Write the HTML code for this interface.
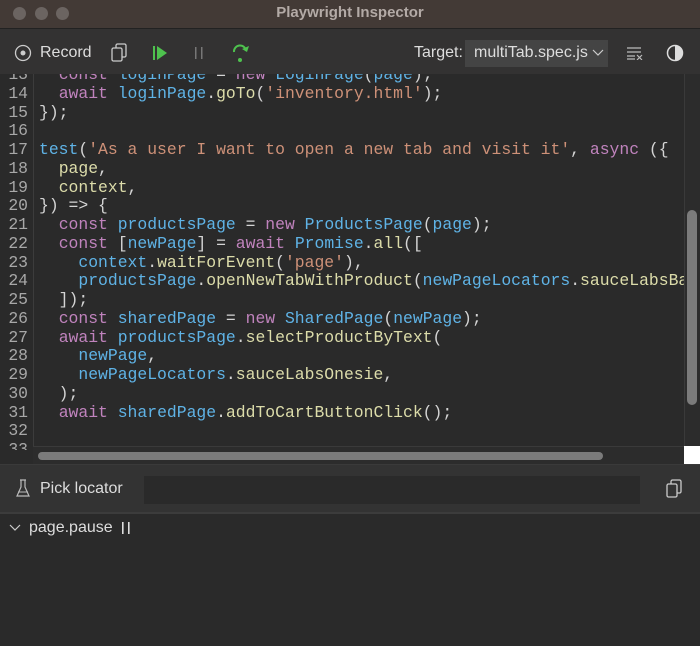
<!DOCTYPE html>
<html><head><style>
*{margin:0;padding:0;box-sizing:border-box}
body{width:700px;height:646px;background:#2a2a2a;overflow:hidden;font-family:"Liberation Sans",sans-serif;position:relative;color:#ddd}
.title{position:absolute;left:0;top:0;width:700px;height:28px;background:#433a36;text-align:center;font-weight:bold;font-size:15px;color:#b3aaa6;line-height:26px;z-index:5}
.dot{position:absolute;top:7px;width:13px;height:13px;border-radius:50%;background:#6b6461;z-index:6}
.tb{position:absolute;left:0;top:28px;width:700px;height:46px;background:#333232;border-top:1px solid #222;z-index:4}
.tb span{position:absolute;top:15px;font-size:16px;color:#ddd}
.code{position:absolute;left:0;top:66px;width:684px;height:384px;overflow:hidden;font-family:"Liberation Mono",monospace;font-size:16.4px;line-height:18.75px;background:#2a2a2a}
.gut{position:absolute;left:0;top:0;width:34px;border-right:1px solid #3c3c3c;height:400px;text-align:right;padding-right:5px;color:#a8a8a8}
.src{position:absolute;left:39px;top:0;white-space:pre;color:#d4d4d4}
.k{color:#c083bd}.v{color:#5fb3e6}.f{color:#dcdcaa}.s{color:#ce9178}
.pl{position:absolute;left:0;top:464px;width:700px;height:50px;background:#333;border-top:1px solid #3a3a3a;border-bottom:2px solid #3c3c3c}
</style></head><body>
<div class="tb">
<svg style="position:absolute;left:14px;top:15px" width="18" height="18"><circle cx="9" cy="9" r="7.5" fill="none" stroke="#ccc" stroke-width="1.3"/><circle cx="9" cy="9" r="2.5" fill="#ccc"/></svg>
<span style="left:40px">Record</span>
<svg style="position:absolute;left:111px;top:14px" width="18" height="20"><rect x="5" y="1" width="10" height="13" rx="1.5" fill="none" stroke="#ccc" stroke-width="1.3"/><rect x="1" y="5" width="10" height="13" rx="1.5" fill="#333232" stroke="#ccc" stroke-width="1.3"/></svg>
<svg style="position:absolute;left:152px;top:16px" width="16" height="16"><rect x="1" y="1" width="2" height="14" fill="#4ec24e"/><path d="M5 1 L15 8 L5 15Z" fill="#4ec24e"/></svg>
<svg style="position:absolute;left:194px;top:17px" width="12" height="14"><rect x="1" y="1" width="1.5" height="12" fill="#777"/><rect x="7" y="1" width="1.5" height="12" fill="#777"/></svg>
<svg style="position:absolute;left:230px;top:13px" width="20" height="22"><path d="M4 10 A6 6 0 1 1 16 9" fill="none" stroke="#4ec24e" stroke-width="2"/><path d="M12 7 L17 10 L19 4Z" fill="#4ec24e"/><circle cx="10" cy="18" r="2" fill="#4ec24e"/></svg>
<span style="left:414px">Target:</span>
<div style="position:absolute;left:465px;top:11px;width:143px;height:27px;background:#444"></div>
<span style="left:474px">multiTab.spec.js</span>
<svg style="position:absolute;left:592px;top:20px" width="12" height="8"><path d="M1 1 L6 6 L11 1" fill="none" stroke="#ccc" stroke-width="1.2"/></svg>
<svg style="position:absolute;left:626px;top:17px" width="18" height="14"><path d="M1 2H15M1 6H15M1 10H9M1 13H9M11 9L16 14M16 9L11 14" stroke="#bbb" stroke-width="1.2" fill="none"/></svg>
<svg style="position:absolute;left:666px;top:15px" width="18" height="18"><circle cx="9" cy="9" r="7.5" fill="none" stroke="#ddd" stroke-width="1.5"/><path d="M9 1.5 A7.5 7.5 0 0 1 9 16.5Z" fill="#ddd"/></svg>
</div>
<div class="code">
<div class="gut">13<br>14<br>15<br>16<br>17<br>18<br>19<br>20<br>21<br>22<br>23<br>24<br>25<br>26<br>27<br>28<br>29<br>30<br>31<br>32<br>33</div>
<div class="src">  <span class="k">const</span> <span class="v">loginPage</span> = <span class="k">new</span> <span class="v">LoginPage</span>(<span class="v">page</span>);
  <span class="k">await</span> <span class="v">loginPage</span>.<span class="f">goTo</span>(<span class="s">'inventory.html'</span>);
});

<span class="v">test</span>(<span class="s">'As a user I want to open a new tab and visit it'</span>, <span class="k">async</span> ({
  <span class="f">page</span>,
  <span class="f">context</span>,
}) => {
  <span class="k">const</span> <span class="v">productsPage</span> = <span class="k">new</span> <span class="v">ProductsPage</span>(<span class="v">page</span>);
  <span class="k">const</span> [<span class="v">newPage</span>] = <span class="k">await</span> <span class="v">Promise</span>.<span class="f">all</span>([
    <span class="v">context</span>.<span class="f">waitForEvent</span>(<span class="s">'page'</span>),
    <span class="v">productsPage</span>.<span class="f">openNewTabWithProduct</span>(<span class="v">newPageLocators</span>.<span class="f">sauceLabsBackpack</span>),
  ]);
  <span class="k">const</span> <span class="v">sharedPage</span> = <span class="k">new</span> <span class="v">SharedPage</span>(<span class="v">newPage</span>);
  <span class="k">await</span> <span class="v">productsPage</span>.<span class="f">selectProductByText</span>(
    <span class="v">newPage</span>,
    <span class="v">newPageLocators</span>.<span class="f">sauceLabsOnesie</span>,
  );
  <span class="k">await</span> <span class="v">sharedPage</span>.<span class="f">addToCartButtonClick</span>();


</div>
</div>
<div style="position:absolute;left:33px;top:446px;width:651px;height:18px;background:#2c2c2c;border-top:1px solid #3a3a3a"></div>
<div style="position:absolute;left:38px;top:452px;width:565px;height:8px;border-radius:4px;background:#7b7b7b"></div>
<div style="position:absolute;left:684px;top:74px;width:16px;height:372px;background:#2c2c2c;border-left:1px solid #3a3a3a"></div>
<div style="position:absolute;left:687px;top:210px;width:10px;height:195px;border-radius:5px;background:#7b7b7b"></div>
<div style="position:absolute;left:684px;top:446px;width:16px;height:18px;background:#fff"></div>
<div class="pl">
<svg style="position:absolute;left:16px;top:14px" width="14" height="20"><path d="M4 1H10M5 1V8L1 17H13L9 8V1" fill="none" stroke="#bbb" stroke-width="1.2"/><path d="M2 13H12" stroke="#bbb"/></svg>
<span style="position:absolute;left:40px;top:15px;font-size:16px;color:#ddd">Pick locator</span>
<div style="position:absolute;left:144px;top:11px;width:496px;height:28px;background:#2a2a2a"></div>
<svg style="position:absolute;left:665px;top:14px" width="18" height="22"><rect x="6" y="1" width="10" height="13" rx="1.5" fill="none" stroke="#ccc" stroke-width="1.3"/><rect x="2" y="5" width="10" height="13" rx="1.5" fill="#333" stroke="#ccc" stroke-width="1.3"/></svg>
</div>
<svg style="position:absolute;left:9px;top:524px" width="12" height="8"><path d="M1 1L6 6L11 1" fill="none" stroke="#ccc" stroke-width="1.2"/></svg>
<span style="position:absolute;left:29px;top:519px;font-size:16px;color:#ddd">page.pause</span>
<svg style="position:absolute;left:120px;top:521px" width="12" height="14"><rect x="2" y="1" width="1.6" height="12" fill="#ddd"/><rect x="8" y="1" width="1.6" height="12" fill="#ddd"/></svg>
<div class="title">Playwright Inspector</div>
<div class="dot" style="left:13px"></div><div class="dot" style="left:35px"></div><div class="dot" style="left:56px"></div>
</body></html>
